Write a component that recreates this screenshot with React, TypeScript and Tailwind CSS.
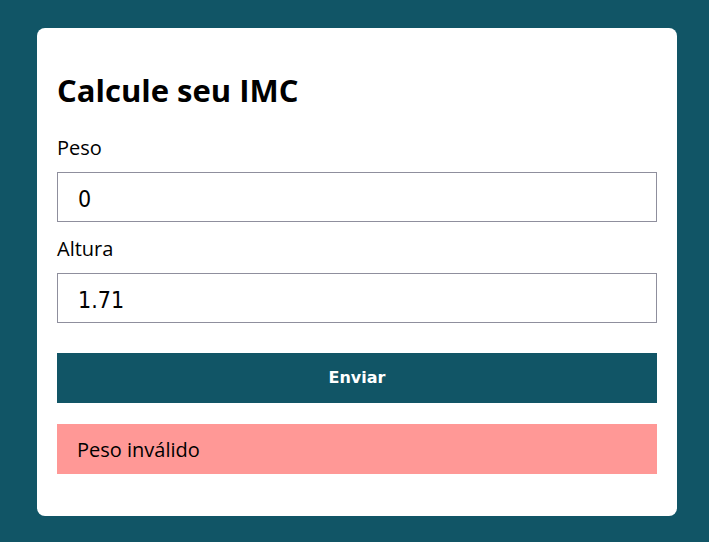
import { useState } from "react"

export default function App() {
  const [peso, setPeso] = useState("0")
  const [altura, setAltura] = useState("1.71")

  return (
    <div className="min-h-screen w-full bg-[#115566] px-[37px] pt-[28px] pb-[26px]">
      <div className="flex w-[640px] flex-col rounded-lg bg-white px-5 pt-5 pb-[42px] font-['Open_Sans',sans-serif] text-black">
        <h1 className="mt-5 mb-[10px] text-[31px] leading-[44px] font-bold">Calcule seu IMC</h1>

        <label htmlFor="peso" className="mt-3 mb-[11px] text-[20px] leading-[27px]">
          Peso
        </label>
        <input
          id="peso"
          value={peso}
          onChange={(e) => setPeso(e.target.value)}
          className="h-[50px] w-full border border-[#8f8f9d] px-5 pt-[3px] font-['DejaVu_Sans_Condensed','DejaVu_Sans',sans-serif] text-[23px] outline-none"
        />

        <label htmlFor="altura" className="mt-[13px] mb-[11px] text-[20px] leading-[27px]">
          Altura
        </label>
        <input
          id="altura"
          value={altura}
          onChange={(e) => setAltura(e.target.value)}
          className="h-[50px] w-full border border-[#8f8f9d] px-5 pt-[3px] font-['DejaVu_Sans_Condensed','DejaVu_Sans',sans-serif] text-[23px] outline-none"
        />

        <button
          type="button"
          className="mt-[30px] h-[50px] w-full bg-[#115566] font-['DejaVu_Sans',sans-serif] text-[16px] font-bold text-white"
        >
          Enviar
        </button>

        <div className="mt-[21px] flex h-[50px] items-center bg-[#ff9896] px-5 text-[20px] leading-[27px]">
          Peso inválido
        </div>
      </div>
    </div>
  )
}
